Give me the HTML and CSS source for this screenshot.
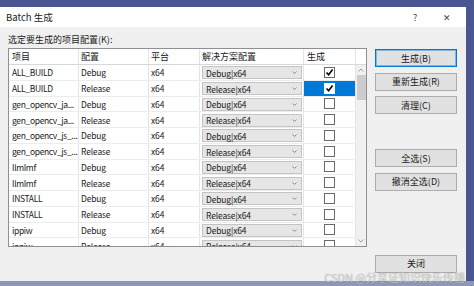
FILE: index.html
```html
<!DOCTYPE html>
<html lang="zh-CN">
<head>
  <meta charset="UTF-8">
  <title>Batch 生成</title>
  <link rel="stylesheet" href="styles.css">
</head>
<body>
  <div class="screen">
    <div class="dialog">
      <div class="titlebar">
        <span class="title">Batch 生成</span>
        <span class="help">?</span>
        <span class="close">✕</span>
      </div>
      <div class="content">
        <div class="caption">选定要生成的项目配置(K):</div>
        <div class="main">
          <div class="grid">
            <div class="head">
              <div class="cell c1">项目</div>
              <div class="cell c2">配置</div>
              <div class="cell c3">平台</div>
              <div class="cell c4">解决方案配置</div>
              <div class="cell c5">生成</div>
              <div class="cell c6"></div>
            </div>
            <div class="body">
              <div class="rows" id="rows"></div>
              <div class="vscroll">
                <span class="arrow up"><svg width="6" height="4" viewBox="0 0 6 4"><path d="M0.5 3.5 L3 1 L5.5 3.5" fill="none" stroke="#a0a0a0" stroke-width="1"/></svg></span>
                <span class="thumb"></span>
                <span class="track"></span>
                <span class="arrow down"><svg width="6" height="4" viewBox="0 0 6 4"><path d="M0.5 0.5 L3 3 L5.5 0.5" fill="none" stroke="#a0a0a0" stroke-width="1"/></svg></span>
              </div>
            </div>
          </div>
          <div class="actions">
            <button class="btn default">生成(B)</button>
            <button class="btn">重新生成(R)</button>
            <button class="btn">清理(C)</button>
            <button class="btn gap-top">全选(S)</button>
            <button class="btn">撤消全选(D)</button>
            <button class="btn close-btn">关闭</button>
          </div>
        </div>
      </div>
    </div>
    <div class="strip"></div>
    <div class="watermark">CSDN @分享证知识快乐传播</div>
  </div>

  <script>
    const projects = [
      ['ALL_BUILD', 'Debug', true],
      ['ALL_BUILD', 'Release', true],
      ['gen_opencv_ja...', 'Debug', false],
      ['gen_opencv_ja...', 'Release', false],
      ['gen_opencv_js_...', 'Debug', false],
      ['gen_opencv_js_...', 'Release', false],
      ['IlmImf', 'Debug', false],
      ['IlmImf', 'Release', false],
      ['INSTALL', 'Debug', false],
      ['INSTALL', 'Release', false],
      ['ippiw', 'Debug', false],
      ['ippiw', 'Release', false]
    ];

    const check = '<svg width="9" height="9" viewBox="0 0 9 9"><path d="M1.5 4.5 L3.6 6.8 L7.6 1.6" fill="none" stroke="#000" stroke-width="1.6"/></svg>';
    const chevron = '<svg width="5" height="3" viewBox="0 0 5 3"><path d="M0.5 0.5 L2.5 2.5 L4.5 0.5" fill="none" stroke="#8a8a8a" stroke-width="1"/></svg>';

    let html = '';
    projects.forEach(([name, config, built], i) => {
      const selected = i === 1 ? ' selected' : '';
      html += '<div class="row">' +
        '<div class="cell c1">' + name + '</div>' +
        '<div class="cell c2">' + config + '</div>' +
        '<div class="cell c3">x64</div>' +
        '<div class="cell c4"><span class="combo"><span>' + config + '|x64</span>' + chevron + '</span></div>' +
        '<div class="cell c5' + selected + '"><span class="box">' + (built ? check : '') + '</span></div>' +
        '</div>';
    });
    document.getElementById('rows').innerHTML = html;
  </script>
</body>
</html>
```

FILE: styles.css
```css
body {
  margin: 0;
  font-family: "Noto Sans CJK SC", "Noto Sans", sans-serif;
  font-size: 9px;
  color: #1a1a1a;
}

.screen {
  position: relative;
  width: 474px;
  height: 286px;
  background-color: #4a5690;
  display: flex;
  flex-direction: column;
  overflow: hidden;
}

.dialog {
  margin-top: 7px;
  width: 466px;
  height: 274px;
  background: #f0f0f0;
  display: flex;
  flex-direction: column;
}

.strip {
  flex: 1;
  width: 474px;
  background: #8e97b8;
}

.titlebar {
  height: 20px;
  background: white;
  display: flex;
  align-items: center;
  padding-left: 6px;
}

.title {
  flex: 1;
  font-size: 9.5px;
}

.help {
  width: 10px;
  margin-right: 20px;
  color: #444;
  font-size: 9px;
}

.close {
  width: 12px;
  margin-right: 11px;
  color: #444;
  font-size: 9px;
}

.content {
  flex: 1;
  padding: 6px 0 0 8px;
}

.caption {
  height: 13px;
  line-height: 13px;
  margin-bottom: 2px;
}

.main {
  display: flex;
  align-items: flex-start;
  gap: 8px;
}

.grid {
  width: 359px;
  height: 199px;
  box-sizing: border-box;
  border: 1px solid #8c8f96;
  background: white;
  display: flex;
  flex-direction: column;
}

.head {
  display: flex;
  height: 15px;
  border-bottom: 1px solid #d8d8d8;
}

.cell {
  box-sizing: border-box;
  border-right: 1px solid #e4e4e4;
  display: flex;
  align-items: center;
  padding-left: 3px;
  white-space: nowrap;
  overflow: hidden;
}

.row .cell {
  font-size: 8.5px;
  letter-spacing: -0.15px;
}

.row .c1 {
  letter-spacing: -0.35px;
}

.c1 { width: 70px; }
.c2 { width: 70px; padding-left: 2px; }
.c3 { width: 51px; padding-left: 2px; }
.c4 { width: 104px; padding-left: 2px; }
.c5 { width: 52px; }
.c6 { width: 10px; border-right: none; }

.head .c5 {
  padding-left: 3px;
}

.body {
  flex: 1;
  display: flex;
  overflow: hidden;
}

.rows {
  width: 347px;
}

.row {
  display: flex;
  height: 15.75px;
  box-sizing: border-box;
  border-bottom: 1px solid #ececec;
}

.row .c4 {
  padding: 1px 1px 0 2px;
}

.combo {
  flex: 1;
  height: 13px;
  box-sizing: border-box;
  border: 1px solid #c4c4c4;
  background: #e6e6e6;
  display: flex;
  align-items: center;
  justify-content: space-between;
  padding: 0 4px 0 3px;
}

.row .c5 {
  justify-content: center;
  padding-left: 0;
}

.c5.selected {
  background: #0078d7;
}

.box {
  width: 11px;
  height: 11px;
  box-sizing: border-box;
  border: 1px solid #6a6a6a;
  background: white;
  display: flex;
  align-items: center;
  justify-content: center;
}

.selected .box {
  border-color: white;
}

.vscroll {
  width: 10px;
  background: #f0f0f0;
  display: flex;
  flex-direction: column;
  align-items: center;
}

.arrow {
  height: 10px;
  display: flex;
  align-items: center;
}

.thumb {
  width: 9px;
  height: 25px;
  background: #cdcdcd;
}

.track {
  flex: 1;
}

.actions {
  width: 82px;
  display: flex;
  flex-direction: column;
  padding-top: 1px;
}

.btn {
  height: 18px;
  margin: 0 0 5.5px;
  padding: 0;
  border: 1px solid #adadad;
  background: #e1e1e1;
  font-family: inherit;
  font-size: 9px;
  color: #1a1a1a;
}

.btn.default {
  border-color: #0078d7;
  box-shadow: inset 0 0 0 1px #7fb8e8;
}

.btn.gap-top {
  margin-top: 29.5px;
}

.btn.close-btn {
  margin-top: 58.5px;
}

.watermark {
  position: absolute;
  right: 9px;
  top: 269px;
  font-size: 11px;
  color: rgba(255, 255, 255, 0.6);
  text-shadow: 0 0 1px rgba(0, 0, 0, 0.45);
  white-space: nowrap;
}
```
